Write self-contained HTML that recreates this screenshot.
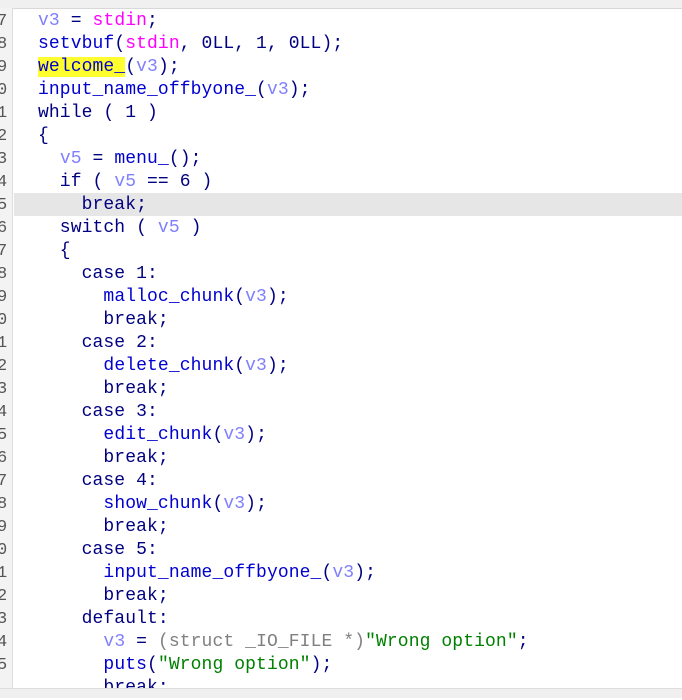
<!DOCTYPE html><html><head><style>
body{margin:0;width:682px;height:697px;overflow:hidden;background:#fff;position:relative;font-family:"Liberation Mono",monospace;}
.tabs{position:absolute;left:0;top:0;width:682px;height:8px;background:#f0f0f0;border-bottom:1px solid #d8d8d8}
.gut{position:absolute;left:0;top:8px;width:12px;height:682px;background:#f3f3f3;border-right:1px solid #ddd}
.ln{position:absolute;left:-3px;width:12px;font-size:17px;color:#555;line-height:23px;height:23px;margin-top:2px}
.row{position:absolute;left:38px;font-size:18px;line-height:23px;height:23px;white-space:pre;color:#000080;letter-spacing:0.1px;margin-top:2px}
.hl{position:absolute;left:14px;right:0;top:193px;height:23px;background:#e6e6e6}
.f{color:#0000d0}.v{color:#8080ff}.m{color:#ff00ff}.s{color:#008000}.g{color:#808080}.y{background:#ffff30}
.bot{position:absolute;left:0;top:688px;width:682px;height:9px;background:#f0f0f0;border-top:1px solid #ddd}
</style></head><body>
<div class="tabs"></div>
<div class="hl"></div>
<div class="gut"></div>
<div class="ln" style="top:8px">7</div><div class="ln" style="top:31px">8</div><div class="ln" style="top:54px">9</div><div class="ln" style="top:77px">0</div><div class="ln" style="top:100px">1</div><div class="ln" style="top:123px">2</div><div class="ln" style="top:146px">3</div><div class="ln" style="top:169px">4</div><div class="ln" style="top:192px">5</div><div class="ln" style="top:215px">6</div><div class="ln" style="top:238px">7</div><div class="ln" style="top:261px">8</div><div class="ln" style="top:284px">9</div><div class="ln" style="top:307px">0</div><div class="ln" style="top:330px">1</div><div class="ln" style="top:353px">2</div><div class="ln" style="top:376px">3</div><div class="ln" style="top:399px">4</div><div class="ln" style="top:422px">5</div><div class="ln" style="top:445px">6</div><div class="ln" style="top:468px">7</div><div class="ln" style="top:491px">8</div><div class="ln" style="top:514px">9</div><div class="ln" style="top:537px">0</div><div class="ln" style="top:560px">1</div><div class="ln" style="top:583px">2</div><div class="ln" style="top:606px">3</div><div class="ln" style="top:629px">4</div><div class="ln" style="top:652px">5</div>
<div class="row" style="top:8px"><span class="v">v3</span> = <span class="m">stdin</span>;</div>
<div class="row" style="top:31px"><span class="f">setvbuf</span>(<span class="m">stdin</span>, 0LL, 1, 0LL);</div>
<div class="row" style="top:54px"><span class="f y">welcome_</span>(<span class="v">v3</span>);</div>
<div class="row" style="top:77px"><span class="f">input_name_offbyone_</span>(<span class="v">v3</span>);</div>
<div class="row" style="top:100px">while ( 1 )</div>
<div class="row" style="top:123px">{</div>
<div class="row" style="top:146px">  <span class="v">v5</span> = <span class="f">menu_</span>();</div>
<div class="row" style="top:169px">  if ( <span class="v">v5</span> == 6 )</div>
<div class="row" style="top:192px">    break;</div>
<div class="row" style="top:215px">  switch ( <span class="v">v5</span> )</div>
<div class="row" style="top:238px">  {</div>
<div class="row" style="top:261px">    case 1:</div>
<div class="row" style="top:284px">      <span class="f">malloc_chunk</span>(<span class="v">v3</span>);</div>
<div class="row" style="top:307px">      break;</div>
<div class="row" style="top:330px">    case 2:</div>
<div class="row" style="top:353px">      <span class="f">delete_chunk</span>(<span class="v">v3</span>);</div>
<div class="row" style="top:376px">      break;</div>
<div class="row" style="top:399px">    case 3:</div>
<div class="row" style="top:422px">      <span class="f">edit_chunk</span>(<span class="v">v3</span>);</div>
<div class="row" style="top:445px">      break;</div>
<div class="row" style="top:468px">    case 4:</div>
<div class="row" style="top:491px">      <span class="f">show_chunk</span>(<span class="v">v3</span>);</div>
<div class="row" style="top:514px">      break;</div>
<div class="row" style="top:537px">    case 5:</div>
<div class="row" style="top:560px">      <span class="f">input_name_offbyone_</span>(<span class="v">v3</span>);</div>
<div class="row" style="top:583px">      break;</div>
<div class="row" style="top:606px">    default:</div>
<div class="row" style="top:629px">      <span class="v">v3</span> = <span class="g">(struct _IO_FILE *)</span><span class="s">"Wrong option"</span>;</div>
<div class="row" style="top:652px">      <span class="f">puts</span>(<span class="s">"Wrong option"</span>);</div>
<div class="row" style="top:675px">      break;</div>
<div class="bot"></div>
</body></html>
